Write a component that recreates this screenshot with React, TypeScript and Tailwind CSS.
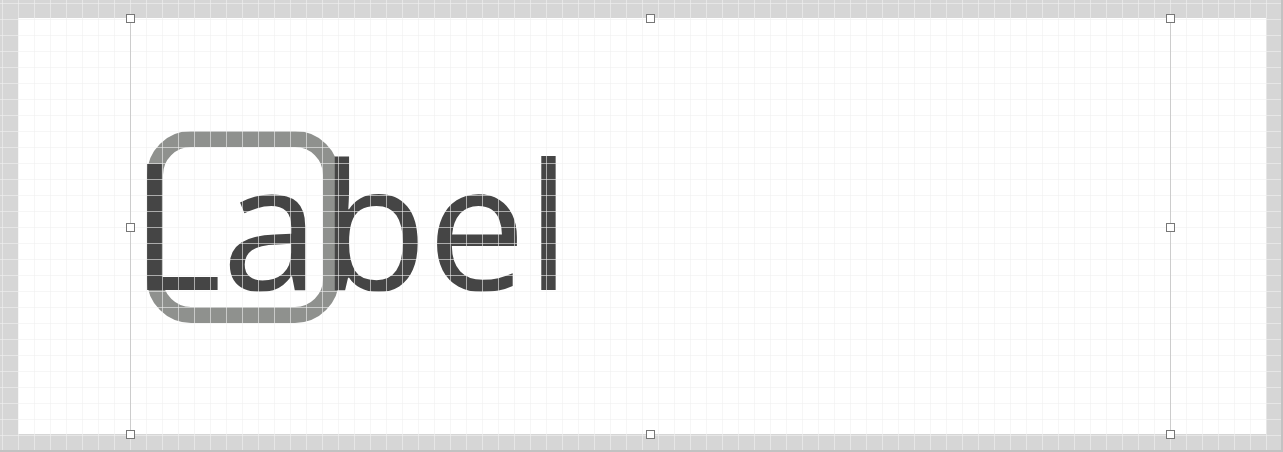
import React from "react";

function Handle({ pos }: { pos: string }) {
  return (
    <div
      className={`absolute w-[9px] h-[9px] bg-white border border-[#777777] ${pos}`}
    />
  );
}

export default function App() {
  return (
    <div className="relative w-[1283px] h-[452px] bg-[#d6d6d6] border-r-2 border-b-2 border-[#c2c2c2] overflow-hidden">
      <div className="pl-[18px] pt-[18px]">
        <div className="relative w-[1248px] h-[416px] bg-white">
          {/* the label node */}
          <div className="absolute left-[112px] top-0 w-[1040px] h-[416px]">
            <div className="absolute left-[17px] top-[113px] w-[192px] h-[192px] rounded-[44px] border-[16px] border-[#8f918e]" />
            <div
              className="relative mt-[116px] text-[176px] leading-none text-[#454545] whitespace-nowrap"
              style={{ fontFamily: '"Open Sans", "Noto Sans", sans-serif' }}
            >
              Label
            </div>
          </div>
        </div>
      </div>

      {/* grid overlay */}
      <div className="pointer-events-none absolute inset-0 bg-[linear-gradient(to_right,rgba(240,240,240,0.6)_1px,transparent_1px),linear-gradient(to_bottom,rgba(240,240,240,0.6)_1px,transparent_1px)] bg-[size:16px_16px] bg-[position:2px_3px]" />

      {/* selection */}
      <div className="pointer-events-none absolute left-[130px] top-[18px] w-[1041px] h-[417px] border-l border-r border-[#cccccc]" />
      <Handle pos="left-[126px] top-[14px]" />
      <Handle pos="left-[646px] top-[14px]" />
      <Handle pos="left-[1166px] top-[14px]" />
      <Handle pos="left-[126px] top-[223px]" />
      <Handle pos="left-[1166px] top-[223px]" />
      <Handle pos="left-[126px] top-[430px]" />
      <Handle pos="left-[646px] top-[430px]" />
      <Handle pos="left-[1166px] top-[430px]" />
    </div>
  );
}
